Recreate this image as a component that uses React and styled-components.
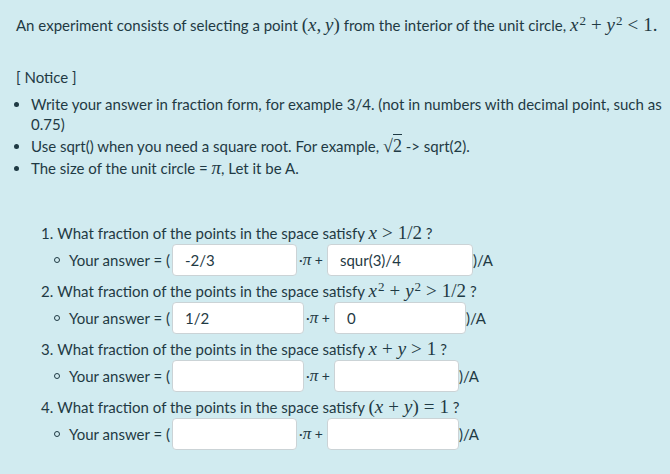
import React from 'react'
import styled, { createGlobalStyle } from 'styled-components'

const Global = createGlobalStyle`
    body {
        margin: 0;
        background: #d1ebf0;
        font-family: Lato, "Open Sans", sans-serif;
        color: #1f3a44;
    }
`

const Page = styled.div`
    width: 670px;
    height: 474px;
    overflow: hidden;
    padding: 14px 0 0 16px;
    box-sizing: border-box;
    font-size: 15px;
    white-space: nowrap;
`

const Intro = styled.p`
    margin: 0;
    line-height: 22px;
`

const Notice = styled.p`
    margin: 30px 0 0 0;
    line-height: 22px;
`

const Rules = styled.ul`
    margin: 6px 0 0 0;
    padding-left: 15px;
    white-space: normal;
    width: 640px;

    li {
        line-height: 20px;
        margin-bottom: 2px;
    }
`

const Questions = styled.ol`
    margin: 44px 0 0 0;
    padding-left: 25px;
    list-style: none;
`

const Question = styled.li`
    line-height: 22px;
    margin-bottom: 4px;
    font-size: 15px;
`

const Num = styled.span`
    margin-right: 4px;
`

const Answers = styled.ul`
    margin: 0;
    padding-left: 13px;
    list-style: none;
`

const Row = styled.li`
    display: flex;
    align-items: center;
    height: 32px;
    font-size: 15px;
`

const Bullet = styled.span`
    width: 4px;
    height: 4px;
    border: 1.3px solid #1f3a44;
    border-radius: 50%;
    margin-right: 9px;
`

const Field = styled.input`
    box-sizing: border-box;
    width: ${p => p.w}px;
    height: 32px;
    margin: 0 0 0 2px;
    padding: 0 12px;
    border: 1px solid #cbd3d6;
    border-radius: 4px;
    background: #fff;
    font-family: Lato, "Open Sans", sans-serif;
    font-size: 15px;
    color: #1f3a44;
    outline: none;
`

const Mi = styled.span`
    font-family: "Liberation Serif", "DejaVu Serif", serif;
    font-style: italic;
    font-size: 19px;
`

const Mn = styled.span`
    font-family: "Liberation Serif", "DejaVu Serif", serif;
    font-size: 19px;
`

const Mo = styled.span`
    font-family: "Liberation Serif", "DejaVu Serif", serif;
    font-size: 19px;
    margin: 0 5px;
`

const Sup = styled.sup`
    font-family: "Liberation Serif", serif;
    font-size: 13px;
    line-height: 0;
    margin-left: 1px;
`

const Sqrt = styled.span`
    font-family: "Liberation Serif", serif;
    font-size: 18px;

    b {
        font-weight: normal;
        border-top: 1px solid #1f3a44;
        padding-top: 1px;
    }
`

const Op = styled.span`
    margin: 0 2px 0 2px;
    font-size: 14px;

    span {
        font-size: 17px;
    }
`

const questions = [
    {
        cond: <><Mi>x</Mi><Mo>&gt;</Mo><Mn>1/2</Mn></>,
        a: ['-2/3', 125], b: ['squr(3)/4', 146],
    },
    {
        cond: <><Mi>x</Mi><Sup>2</Sup><Mo>+</Mo><Mi>y</Mi><Sup>2</Sup><Mo>&gt;</Mo><Mn>1/2</Mn></>,
        a: ['1/2', 132], b: ['0', 132],
    },
    {
        cond: <><Mi>x</Mi><Mo>+</Mo><Mi>y</Mi><Mo>&gt;</Mo><Mn>1</Mn></>,
        a: ['', 132], b: ['', 125],
    },
    {
        cond: <><Mn>(</Mn><Mi>x</Mi><Mo>+</Mo><Mi>y</Mi><Mn>)</Mn><Mo>=</Mo><Mn>1</Mn></>,
        a: ['', 125], b: ['', 132],
    },
]

const App = () => {
    return (
        <Page>
            <Global />
            <Intro>
                An experiment consists of selecting a point <Mn>(</Mn><Mi>x</Mi><Mn>,</Mn> <Mi>y</Mi><Mn>)</Mn> from
                the interior of the unit circle, <Mi>x</Mi><Sup>2</Sup><Mo>+</Mo><Mi>y</Mi><Sup>2</Sup><Mo>&lt;</Mo><Mn>1.</Mn>
            </Intro>
            <Notice>[ Notice ]</Notice>
            <Rules>
                <li>Write your answer in fraction form, for example 3/4. (not in numbers with decimal point, such as 0.75)</li>
                <li>Use sqrt() when you need a square root. For example, <Sqrt>√<b>2</b></Sqrt> -&gt; sqrt(2).</li>
                <li>The size of the unit circle = <Mi>π</Mi>, Let it be A.</li>
            </Rules>
            <Questions>
                {questions.map((q, i) => (
                    <Question key={i}>
                        <Num>{i + 1}.</Num>What fraction of the points in the space satisfy {q.cond} ?
                        <Answers>
                            <Row>
                                <Bullet />
                                Your answer = (
                                <Field w={q.a[1]} defaultValue={q.a[0]} />
                                <Op>·<Mi as="span">π</Mi> +</Op>
                                <Field w={q.b[1]} defaultValue={q.b[0]} />
                                )/A
                            </Row>
                        </Answers>
                    </Question>
                ))}
            </Questions>
        </Page>
    )
}

export default App
